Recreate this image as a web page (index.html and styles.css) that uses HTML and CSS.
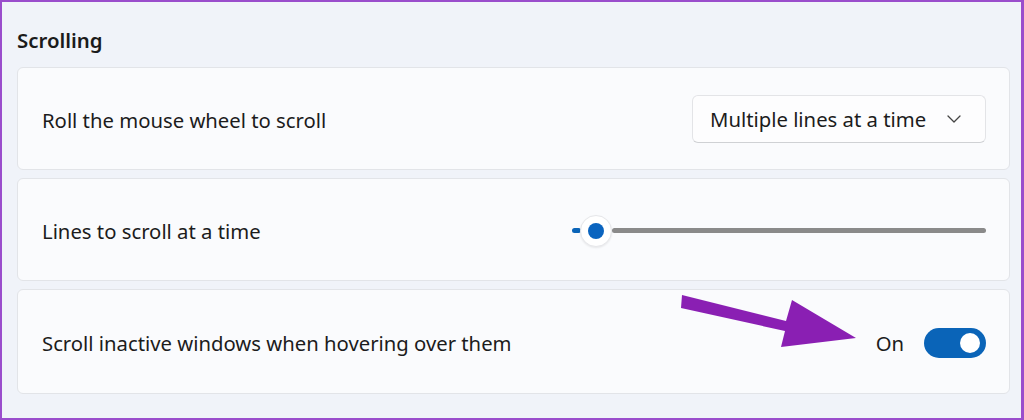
FILE: index.html
```html
<!DOCTYPE html>
<html>
<head>
<meta charset="utf-8">
<link rel="stylesheet" href="styles.css">
</head>
<body>
<div class="frame">
  <h2 class="title">Scrolling</h2>
  <div class="cards">
    <div class="card">
      <span class="label">Roll the mouse wheel to scroll</span>
      <div class="select">
        <span>Multiple lines at a time</span>
        <svg class="chev" width="14" height="8" viewBox="0 0 14 8"><path d="M1 1 L7 7 L13 1" fill="none" stroke="#444" stroke-width="1.3" stroke-linecap="round" stroke-linejoin="round"/></svg>
      </div>
    </div>
    <div class="card">
      <span class="label">Lines to scroll at a time</span>
      <div class="slider">
        <div class="fill"></div>
        <div class="thumb"><div class="dot"></div></div>
        <div class="track"></div>
      </div>
    </div>
    <div class="card card-last">
      <span class="label">Scroll inactive windows when hovering over them</span>
      <div class="toggle-wrap">
        <span class="state">On</span>
        <div class="toggle"><div class="knob"></div></div>
      </div>
    </div>
  </div>
  <svg class="arrow" width="1024" height="420" viewBox="0 0 1024 420">
    <path d="M682 295 L786 321 L792 300 L856 338 L781 347 L785 331 L681 308 Z" fill="#8a1fb3"/>
  </svg>
</div>
</body>
</html>
```
FILE: styles.css
```css
html, body {
  margin: 0;
  padding: 0;
}
body {
  width: 1024px;
  height: 420px;
  font-family: "Noto Sans", "Open Sans", sans-serif;
  color: #1c1c1c;
}
.frame {
  position: relative;
  box-sizing: border-box;
  width: 1024px;
  height: 420px;
  border: 2px solid #9a4dcc;
  border-right-width: 3px;
  background: #f0f3f9;
  padding: 0 11px 0 15px;
}
.title {
  margin: 0;
  padding: 25px 0 0 0;
  height: 39px;
  box-sizing: border-box;
  font-size: 20.4px;
  font-weight: 600;
  line-height: 26px;
  color: #1b1b1b;
}
.cards {
  margin-top: 26px;
  display: flex;
  flex-direction: column;
  gap: 8px;
}
.card {
  box-sizing: border-box;
  height: 103px;
  background: #fafbfd;
  border: 1px solid #e2e4e8;
  border-radius: 6px;
  display: flex;
  align-items: center;
  justify-content: space-between;
  padding: 2px 23px 0 24px;
}
.card-last {
  height: 105px;
}
.label {
  font-size: 20.3px;
  color: #1c1c1c;
}
.select {
  box-sizing: border-box;
  width: 294px;
  height: 48px;
  margin-top: -2px;
  background: #fdfdfe;
  border: 1px solid #e3e4e7;
  border-bottom-color: #cfd1d4;
  border-radius: 6px;
  display: flex;
  align-items: center;
  justify-content: space-between;
  padding: 0 24px 0 17px;
  font-size: 20.3px;
  color: #1c1c1c;
}
.chev {
  margin-top: 1px;
}
.slider {
  width: 414px;
  height: 34px;
  display: flex;
  align-items: center;
}
.fill {
  width: 9px;
  height: 5px;
  border-radius: 3px;
  background: #0a64b8;
}
.thumb {
  box-sizing: border-box;
  width: 32px;
  height: 32px;
  margin-left: -1px;
  border-radius: 50%;
  background: #ffffff;
  border: 1px solid #e6e7ea;
  box-shadow: 0 1px 2px rgba(0,0,0,0.08);
  display: flex;
  align-items: center;
  justify-content: center;
}
.dot {
  width: 16px;
  height: 16px;
  border-radius: 50%;
  background: #0a64bf;
}
.track {
  flex: 1;
  height: 5px;
  border-radius: 3px;
  background: #8a8a8a;
}
.toggle-wrap {
  display: flex;
  align-items: center;
  gap: 20px;
}
.state {
  font-size: 20.3px;
  color: #1c1c1c;
}
.toggle {
  box-sizing: border-box;
  width: 62px;
  height: 30px;
  border-radius: 15px;
  background: #0a64b8;
  display: flex;
  align-items: center;
  justify-content: flex-end;
  padding-right: 6px;
}
.knob {
  width: 20px;
  height: 20px;
  border-radius: 50%;
  background: #ffffff;
}
.arrow {
  position: absolute;
  left: -2px;
  top: -2px;
  pointer-events: none;
}
```
